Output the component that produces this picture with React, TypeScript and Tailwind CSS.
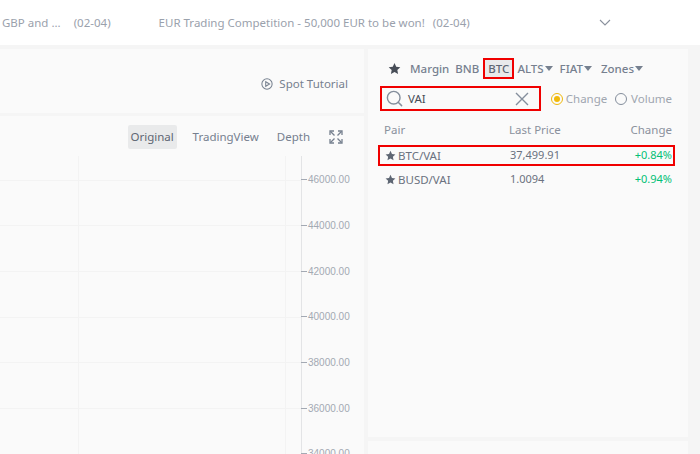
import { Search } from "lucide-react";

const FONT = "font-['Noto_Sans','Open_Sans',sans-serif]";

const axisLabels = ["46000.00", "44000.00", "42000.00", "40000.00", "38000.00", "36000.00", "34000.00"];

function Star({ className }: { className: string }) {
  return (
    <svg viewBox="0 0 24 24" className={className} fill="currentColor">
      <path d="M12 1.800l3.200 6.900 7.500.9-5.500 5.100 1.400 7.400L12 18.400l-6.600 3.700 1.400-7.400L1.300 9.600l7.500-.9z" />
    </svg>
  );
}

function Caret() {
  return <span className="ml-[1px] h-0 w-0 border-x-[4px] border-t-[5px] border-x-transparent border-t-[#76808f]" />;
}

function ExpandIcon() {
  return (
    <svg viewBox="0 0 14 14" className="h-[14px] w-[14px]" fill="none" stroke="#76808f" strokeWidth="1.300">
      <path d="M1 5V1h4M9 1h4v4M1 9v4h4M13 9v4H9" />
      <path d="M1.500 1.500l4 4M12.500 1.500l-4 4M1.500 12.500l4-4M12.500 12.500l-4-4" />
    </svg>
  );
}

function PairRow({ pair, price, change, marked }: { pair: string; price: string; change: string; marked?: boolean }) {
  return (
    <div
      className={`flex h-[21px] items-center text-[11.5px] text-[#6b7280] ${
        marked ? "ml-[-6px] mr-[-3px] border-2 border-[#f00000] pl-[5px] pr-[1px]" : "pl-[1px]"
      }`}
    >
      <Star className="h-[11px] w-[11px] text-[#5e6673]" />
      <span className="ml-[2px] w-[112px]">{pair}</span>
      <span className="text-[11px]">{price}</span>
      <span className="ml-auto text-[11px] text-[#02c076]">{change}</span>
    </div>
  );
}

export default function App() {
  return (
    <div className={`${FONT} flex h-[454px] w-[700px] flex-col overflow-hidden bg-[#f5f5f5]`}>
      {/* news ticker */}
      <header className="flex h-[45px] shrink-0 items-center whitespace-nowrap bg-white text-[11.5px] text-[#9aa1ac]">
        <span className="ml-[2px]">GBP and ...</span>
        <span className="ml-[13px]">(02-04)</span>
        <span className="ml-[48px]">EUR Trading Competition - 50,000 EUR to be won!</span>
        <span className="ml-[8px]">(02-04)</span>
        <svg viewBox="0 0 12 7" className="ml-[129px] h-[7px] w-[12px]" fill="none" stroke="#8a919d" strokeWidth="1.100">
          <path d="M1 1l5 5 5-5" />
        </svg>
      </header>

      <div className="mt-[4px] flex min-h-0 flex-1 gap-[4px]">
        <div className="flex w-[364px] flex-col gap-[3px]">
          <div className="flex h-[64px] shrink-0 items-center justify-end bg-[#fafafa] pr-[16px] pt-[5px] text-[11.5px] text-[#76808f]">
            <svg viewBox="0 0 14 14" className="mr-[6px] h-[12px] w-[12px]" fill="none" stroke="#76808f" strokeWidth="1.200">
              <circle cx="7" cy="7" r="6" />
              <path d="M5.500 4.300v5.400L10 7z" />
            </svg>
            Spot Tutorial
          </div>

          <div className="flex min-h-0 flex-1 flex-col bg-[#fafafa]">
            <div className="flex h-[40px] shrink-0 items-center justify-end pr-[21px] pt-[2px] text-[11.5px] text-[#76808f]">
              <span className="flex h-[24px] w-[49px] items-center justify-center rounded-[2px] bg-[#e9eaeb] text-[#5e6673]">Original</span>
              <span className="ml-[16px]">TradingView</span>
              <span className="ml-[18px]">Depth</span>
              <span className="ml-[19px]">
                <ExpandIcon />
              </span>
            </div>

            {/* price chart */}
            <div className="relative ml-[-8px] flex min-h-0 flex-1 flex-col overflow-hidden pl-[309px] pt-[1px]">
              <span className="absolute bottom-0 left-[86px] top-0 w-px bg-[#f3f3f3]" />
              <span className="absolute bottom-0 left-[293px] top-0 w-px bg-[#f3f3f3]" />
              <span className="absolute bottom-0 left-[309px] top-0 w-px bg-[#e3e4e6]" />
              {axisLabels.map((label) => (
                <div
                  key={label}
                  className="relative flex h-[45.670px] shrink-0 items-center whitespace-nowrap font-['Liberation_Sans',sans-serif] text-[10px] text-[#a3a9b3]"
                >
                  <span className="absolute right-full top-1/2 h-px w-[309px] bg-[#f3f3f3]" />
                  <span className="h-px w-[6px] bg-[#a3a9b3]" />
                  <span className="ml-[1px]">{label}</span>
                </div>
              ))}
            </div>
          </div>
        </div>

        {/* market panel */}
        <div className="flex w-[320px] flex-col gap-[4px]">
          <div className="h-[388px] shrink-0 bg-[#fafafa] px-[16px]">
            <div className="mt-[9px] flex h-[21px] items-center text-[11.5px] font-medium text-[#76808f]">
              <Star className="ml-[4px] h-[13px] w-[13px] text-[#474d57]" />
              <span className="ml-[9px]">Margin</span>
              <span className="ml-[6px]">BNB</span>
              <span className="ml-[4px] flex h-[21px] items-center border-2 border-[#f00000] bg-[#e9eaeb] px-[3px] text-[#5e6673]">BTC</span>
              <span className="ml-[3px]">ALTS</span>
              <Caret />
              <span className="ml-[7px]">FIAT</span>
              <Caret />
              <span className="ml-[9px]">Zones</span>
              <Caret />
            </div>

            <div className="mt-[7px] flex items-center">
              <div className="ml-[-4px] flex h-[25px] w-[161px] shrink-0 items-center border-2 border-[#f00000] pl-[3px] text-[11.5px] text-[#474d57]">
                <Search className="h-[19px] w-[19px] text-[#848e9c]" strokeWidth={1.800} />
                <span className="ml-[4px]">VAI</span>
                <svg viewBox="0 0 14 14" className="ml-auto mr-[10px] h-[14px] w-[14px]" fill="none" stroke="#848e9c" strokeWidth="1.400">
                  <path d="M1 1l12 12M13 1L1 13" />
                </svg>
              </div>
              <span className="ml-[10px] flex h-[12px] w-[12px] items-center justify-center rounded-full border border-[#f0b90b]">
                <span className="h-[6px] w-[6px] rounded-full bg-[#f0b90b]" />
              </span>
              <span className="ml-[3px] text-[11.5px] text-[#a0a6b0]">Change</span>
              <span className="ml-[8px] h-[12px] w-[12px] rounded-full border border-[#848e9c]" />
              <span className="ml-[4px] text-[11.5px] text-[#a0a6b0]">Volume</span>
            </div>

            <div className="mt-[8px] flex h-[21px] items-center text-[11.5px] text-[#8a919d]">
              <span className="w-[125px]">Pair</span>
              <span>Last Price</span>
              <span className="ml-auto">Change</span>
            </div>
            <div className="mt-[5px] flex flex-col gap-[3px]">
              <PairRow pair="BTC/VAI" price="37,499.91" change="+0.84%" marked />
              <PairRow pair="BUSD/VAI" price="1.0094" change="+0.94%" />
            </div>
          </div>
          <div className="flex-1 bg-[#fafafa]" />
        </div>
      </div>
    </div>
  );
}
